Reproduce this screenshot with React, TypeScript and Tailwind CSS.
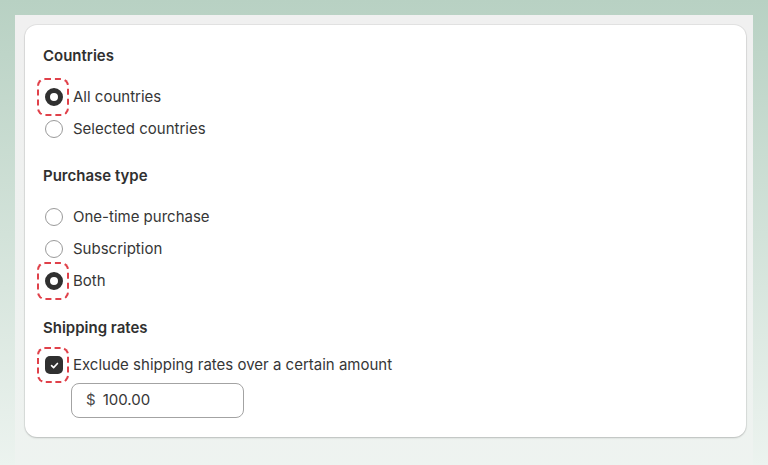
import React from "react";

function Dashed({ h = 38 }: { h?: number }) {
  return (
    <span
      className={`pointer-events-none absolute left-[-8px] w-[32px] rounded-[8px] border-2 border-dashed border-[#e0414a] ${
        h === 38 ? "top-[-10px] h-[38px]" : "top-[-9px] h-[36px]"
      }`}
    />
  );
}

function Radio({ checked, label, mark }: { checked?: boolean; label: string; mark?: boolean }) {
  return (
    <div className="flex h-8 items-center">
      <span className="relative ml-[2px] flex h-[18px] w-[18px] shrink-0">
        {checked ? (
          <span className="h-[18px] w-[18px] rounded-full border-[5.5px] border-[#303030] bg-white" />
        ) : (
          <span className="h-[18px] w-[18px] rounded-full border border-[#9a9a9a] bg-white" />
        )}
        {mark && <Dashed />}
      </span>
      <span className="ml-[10px] text-[15px] text-[#363636]">{label}</span>
    </div>
  );
}

export default function App() {
  return (
    <div
      className="h-[465px] w-[768px] overflow-hidden bg-gradient-to-b from-[#b8d1c3] to-[#ecf3ef] pl-[15px] pt-[15px]"
      style={{ fontFamily: "Inter, 'Noto Sans', sans-serif" }}
    >
      <div className="h-[470px] w-[738px] bg-gradient-to-b from-[#f0f0f0] to-[#eef3f0] pl-[10px] pt-[10px]">
        <div className="w-[721px] rounded-[12px] bg-white px-[18px] pb-[19px] pt-[21px] shadow-[0_0_0_1px_rgba(0,0,0,0.05),0_1px_2px_rgba(0,0,0,0.18)]">
          <div className="flex h-5 items-center text-[15px] font-semibold text-[#303030]">Countries</div>
          <div className="mt-[15px]">
            <Radio checked mark label="All countries" />
            <Radio label="Selected countries" />
          </div>
          <div className="mt-[21px] flex h-5 items-center text-[15px] font-semibold text-[#303030]">Purchase type</div>
          <div className="mt-[15px]">
            <Radio label="One-time purchase" />
            <Radio label="Subscription" />
            <Radio checked mark label="Both" />
          </div>
          <div className="mt-[21px] flex h-5 items-center text-[15px] font-semibold text-[#303030]">Shipping rates</div>
          <div className="mt-[11px] flex h-8 items-center">
            <span className="relative ml-[2px] flex h-[18px] w-[18px] shrink-0 items-center justify-center rounded-[5px] bg-[#303030]">
              <svg viewBox="0 0 12 12" className="h-[11px] w-[11px]" fill="none" stroke="white" strokeWidth="1.8" strokeLinecap="round" strokeLinejoin="round">
                <path d="M2.8 6.2 5 8.3 9.2 3.8" />
              </svg>
              <Dashed h={36} />
            </span>
            <span className="ml-[10px] text-[15px] text-[#363636]">Exclude shipping rates over a certain amount</span>
          </div>
          <div className="ml-[28px] mt-[2px] flex h-[35px] w-[173px] items-center rounded-[8px] border border-[#a3a3a3] pl-[14px] text-[15px] text-[#363636]">
            <span className="text-[#4a4a4a]">$</span>
            <span className="ml-[7px]">100.00</span>
          </div>
        </div>
      </div>
    </div>
  );
}
